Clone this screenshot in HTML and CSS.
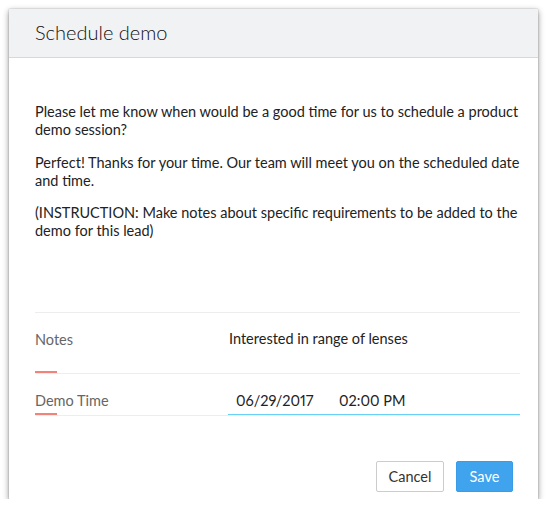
FILE: index.html
```html
<!DOCTYPE html>
<html lang="en">
<head>
<meta charset="utf-8">
<title>Schedule demo</title>
<link rel="stylesheet" href="styles.css">
</head>
<body>
<div class="dialog">
  <div class="dialog-header">
    <h1 class="dialog-title">Schedule demo</h1>
  </div>
  <div class="dialog-body">
    <div class="script">
      <p>Please let me know when would be a good time for us to schedule a product demo session?</p>
      <p>Perfect! Thanks for your time. Our team will meet you on the scheduled date and time.</p>
      <p>(INSTRUCTION: Make notes about specific requirements to be added to the demo for this lead)</p>
    </div>
    <div class="fields">
      <div class="field field-notes">
        <div class="field-label"><span>Notes</span><i class="bar"></i></div>
        <div class="field-value">Interested in range of lenses</div>
      </div>
      <div class="field field-time">
        <div class="field-label"><span>Demo Time</span><i class="bar"></i></div>
        <div class="field-input"><span class="date">06/29/2017</span><span class="time">02:00 PM</span></div>
      </div>
    </div>
  </div>
  <div class="dialog-footer">
    <button class="btn btn-cancel">Cancel</button>
    <button class="btn btn-save">Save</button>
  </div>
</div>
</body>
</html>
```
FILE: styles.css
```css
html, body {
  margin: 0;
  padding: 0;
  background: #ffffff;
}
body {
  font-family: Lato, "Open Sans", sans-serif;
  color: #222;
  padding: 9px 0 0 9px;
}
.dialog {
  width: 529px;
  height: 490px;
  background: #fff;
  box-shadow: 0 2px 6px rgba(0, 0, 0, 0.45), 0 0 1px rgba(0, 0, 0, 0.35);
  display: flex;
  flex-direction: column;
}
.dialog-header {
  height: 48px;
  background: #f1f2f4;
  border-bottom: 1px solid #d8d8d8;
  display: flex;
  align-items: center;
  padding-left: 26px;
}
.dialog-title {
  margin: 0;
  font-size: 20px;
  font-weight: 300;
  color: #111;
  line-height: 24px;
  padding-bottom: 2px;
}
.dialog-body {
  padding: 45px 18px 0 26px;
}
.script p {
  margin: 0 0 14.5px;
  font-size: 14.5px;
  line-height: 18px;
  color: #222;
}
.script p:last-child {
  margin-bottom: 0;
}
.fields {
  margin-top: 72px;
  border-top: 1px solid #ededed;
}
.field {
  display: flex;
  border-bottom: 1px solid #ededed;
}
.field-notes {
  height: 60px;
}
.field-time {
  height: 41px;
}
.field-label {
  width: 194px;
  flex: none;
  display: flex;
  flex-direction: column;
  justify-content: space-between;
  padding-top: 18px;
  font-size: 14.5px;
  line-height: 18px;
  color: #666;
}
.bar {
  display: block;
  width: 22px;
  height: 2px;
  background: #f2837b;
}
.field-value {
  padding-top: 17px;
  font-size: 14.5px;
  line-height: 18px;
  color: #222;
}
.field-input {
  flex: 1;
  margin-left: -1px;
  padding: 18px 0 0 8px;
  font-size: 14.5px;
  line-height: 18px;
  color: #222;
  border-bottom: 1px solid #6ccff6;
  display: flex;
  font-variant-numeric: proportional-nums;
}
.date {
  width: 103px;
  flex: none;
}
.dialog-footer {
  margin-top: auto;
  display: flex;
  justify-content: flex-end;
  gap: 12px;
  padding: 0 25px 7px 0;
}
.btn {
  font-family: inherit;
  font-size: 14.5px;
  height: 31px;
  border-radius: 2px;
  cursor: pointer;
}
.btn-cancel {
  width: 68px;
  background: #fff;
  border: 1px solid #cccccc;
  color: #333;
}
.btn-save {
  width: 57px;
  background: #40a3ee;
  border: 1px solid #3a9be8;
  color: #fff;
}
```
